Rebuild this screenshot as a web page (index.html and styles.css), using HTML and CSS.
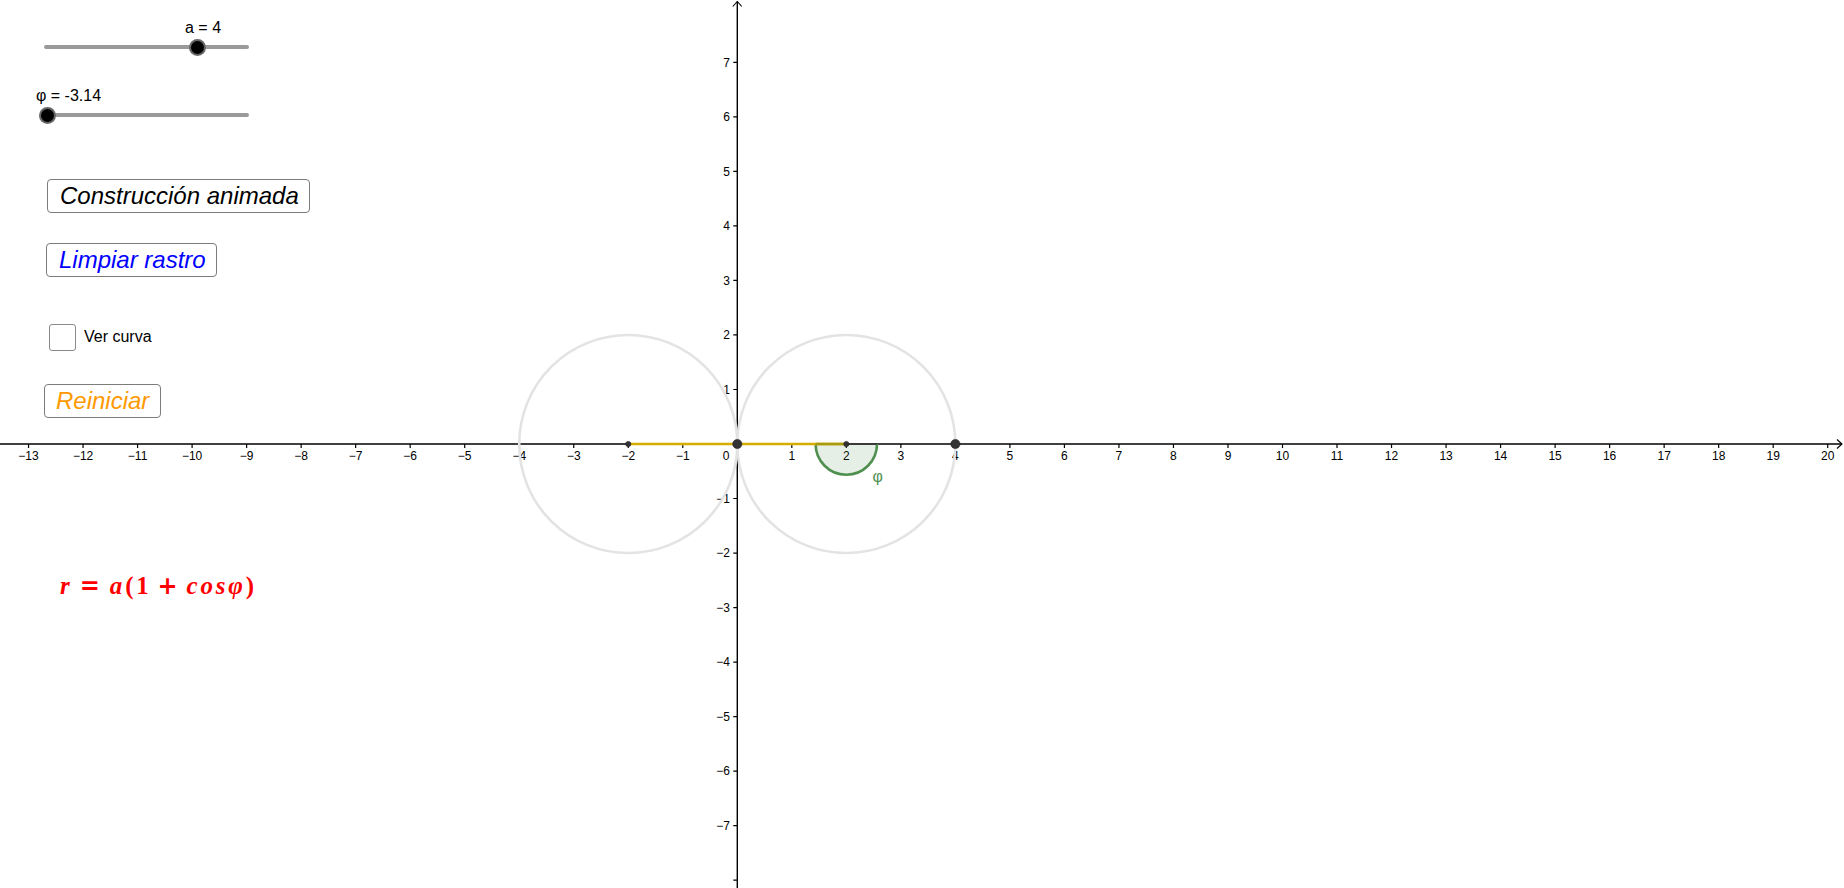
FILE: index.html
```html
<!DOCTYPE html>
<html lang="es">
<head>
<meta charset="utf-8">
<title>Cardioide</title>
<link rel="stylesheet" href="styles.css">
</head>
<body>
<div class="app">
  <svg class="graph" width="1844" height="888" viewBox="0 0 1844 888" xmlns="http://www.w3.org/2000/svg">
    <!-- axes -->
    <line class="axis" x1="0" y1="444" x2="1842" y2="444"/>
    <polyline class="arrow" points="1837,439.5 1842,444 1837,448.5"/>
    <line class="axis" x1="737.3" y1="888" x2="737.3" y2="1.5"/>
    <polyline class="arrow" points="732.8,6.5 737.3,1.5 741.8,6.5"/>
    <path class="ticks" d="M28.54 444v4M83.06 444v4M137.58 444v4M192.1 444v4M246.62 444v4M301.14 444v4M355.66 444v4M410.18 444v4M464.7 444v4M519.22 444v4M573.74 444v4M628.26 444v4M682.78 444v4M791.82 444v4M846.34 444v4M900.86 444v4M955.38 444v4M1009.9 444v4M1064.42 444v4M1118.94 444v4M1173.46 444v4M1227.98 444v4M1282.5 444v4M1337.02 444v4M1391.54 444v4M1446.06 444v4M1500.58 444v4M1555.1 444v4M1609.62 444v4M1664.14 444v4M1718.66 444v4M1773.18 444v4M1827.7 444v4M737.3 62.36h-4M737.3 116.88h-4M737.3 171.4h-4M737.3 225.92h-4M737.3 280.44h-4M737.3 334.96h-4M737.3 389.48h-4M737.3 498.52h-4M737.3 553.04h-4M737.3 607.56h-4M737.3 662.08h-4M737.3 716.6h-4M737.3 771.12h-4M737.3 825.64h-4M737.3 880.16h-4"/>
    <g class="xlabels">
      <text x="28.54" y="460">−13</text>
      <text x="83.06" y="460">−12</text>
      <text x="137.58" y="460">−11</text>
      <text x="192.1" y="460">−10</text>
      <text x="246.62" y="460">−9</text>
      <text x="301.14" y="460">−8</text>
      <text x="355.66" y="460">−7</text>
      <text x="410.18" y="460">−6</text>
      <text x="464.7" y="460">−5</text>
      <text x="519.22" y="460">−4</text>
      <text x="573.74" y="460">−3</text>
      <text x="628.26" y="460">−2</text>
      <text x="682.78" y="460">−1</text>
      <text x="726" y="460">0</text>
      <text x="791.82" y="460">1</text>
      <text x="846.34" y="460">2</text>
      <text x="900.86" y="460">3</text>
      <text x="955.38" y="460">4</text>
      <text x="1009.9" y="460">5</text>
      <text x="1064.42" y="460">6</text>
      <text x="1118.94" y="460">7</text>
      <text x="1173.46" y="460">8</text>
      <text x="1227.98" y="460">9</text>
      <text x="1282.5" y="460">10</text>
      <text x="1337.02" y="460">11</text>
      <text x="1391.54" y="460">12</text>
      <text x="1446.06" y="460">13</text>
      <text x="1500.58" y="460">14</text>
      <text x="1555.1" y="460">15</text>
      <text x="1609.62" y="460">16</text>
      <text x="1664.14" y="460">17</text>
      <text x="1718.66" y="460">18</text>
      <text x="1773.18" y="460">19</text>
      <text x="1827.7" y="460">20</text>
    </g>
    <g class="ylabels">
      <text x="730" y="66.6">7</text>
      <text x="730" y="121.2">6</text>
      <text x="730" y="175.7">5</text>
      <text x="730" y="230.2">4</text>
      <text x="730" y="284.7">3</text>
      <text x="730" y="339.3">2</text>
      <text x="730" y="393.8">1</text>
      <text x="730" y="502.8">−1</text>
      <text x="730" y="557.3">−2</text>
      <text x="730" y="611.9">−3</text>
      <text x="730" y="666.4">−4</text>
      <text x="730" y="720.9">−5</text>
      <text x="730" y="775.4">−6</text>
      <text x="730" y="829.9">−7</text>
    </g>
    <!-- circles -->
    <circle class="circ" cx="628.26" cy="444" r="109.04"/>
    <circle class="circ" cx="846.34" cy="444" r="109.04"/>
    <!-- angle sector -->
    <path class="sector" d="M815.6 444 A30.7 30.7 0 0 0 877 444 Z"/>
    <path class="sector-arc" d="M815.6 444 A30.7 30.7 0 0 0 877 444"/>
    <!-- segment -->
    <line class="seg" x1="628.26" y1="444" x2="846.34" y2="444"/>
    <line class="seg-dark" x1="815.6" y1="444" x2="846.34" y2="444"/>
    <line class="arm" x1="846.34" y1="444" x2="877" y2="444"/>
    <!-- points -->
    <circle class="pt" cx="737.3" cy="444" r="4.6"/>
    <circle class="pt" cx="955.38" cy="444" r="4.6"/>
    <circle class="pt" cx="628.26" cy="444" r="2.6"/>
    <circle class="pt" cx="846.34" cy="444" r="2.6"/>
    <text class="angle-label" x="872.5" y="481.5">φ</text>
  </svg>

  <div class="panel">
    <div class="slider slider-a">
      <div class="slider-label">a = 4</div>
      <div class="slider-track">
        <div class="knob knob-a"></div>
      </div>
    </div>
    <div class="slider slider-phi">
      <div class="slider-label">φ = -3.14</div>
      <div class="slider-track">
        <div class="knob knob-phi"></div>
      </div>
    </div>

    <button class="btn btn-build">Construcción animada</button>
    <button class="btn btn-clear">Limpiar rastro</button>

    <label class="check">
      <span class="check-box"></span>
      <span class="check-text">Ver curva</span>
    </label>

    <button class="btn btn-reset">Reiniciar</button>

    <div class="formula"><i>r</i><span class="op">=</span><i>a</i><span class="up">(1</span><span class="op op-bin">+</span><i>cos</i><i class="phi">φ</i><span class="up">)</span></div>
  </div>
</div>
</body>
</html>
```

FILE: styles.css
```css
html, body {
  margin: 0;
  padding: 0;
  background: #ffffff;
}

body {
  width: 1844px;
  height: 888px;
  overflow: hidden;
  font-family: "Liberation Sans", Arial, sans-serif;
}

.app {
  position: relative;
  width: 1844px;
  height: 888px;
}

.graph {
  display: block;
}

.axis {
  stroke: #000;
  stroke-width: 1.4;
}

.arrow {
  fill: none;
  stroke: #000;
  stroke-width: 1.1;
}

.ticks {
  stroke: #000;
  stroke-width: 1.2;
  fill: none;
}

.xlabels text,
.ylabels text {
  font-family: "Liberation Sans", Arial, sans-serif;
  font-size: 12px;
  fill: #000;
}

.xlabels text {
  text-anchor: middle;
}

.ylabels text {
  text-anchor: end;
}

.circ {
  fill: none;
  stroke: #e3e3e3;
  stroke-width: 2.6;
}

.sector {
  fill: rgba(76, 140, 76, 0.14);
  stroke: none;
}

.sector-arc {
  fill: none;
  stroke: #4f8f4f;
  stroke-width: 2.6;
}

.seg {
  stroke: #d6ae00;
  stroke-width: 2.6;
}

.seg-dark {
  stroke: #a99a12;
  stroke-width: 2.6;
}

.arm {
  stroke: #3a3a3a;
  stroke-width: 2;
}

.pt {
  fill: #333333;
  stroke: #222;
  stroke-width: 0.6;
}

.angle-label {
  font-family: "Liberation Sans", Arial, sans-serif;
  font-size: 16px;
  fill: #4f8f4f;
}

/* left panel */
.panel {
  position: absolute;
  top: 0;
  left: 0;
  display: flex;
  flex-direction: column;
  align-items: flex-start;
}

.slider {
  display: flex;
  flex-direction: column;
}

.slider-label {
  font-size: 16px;
  line-height: 20px;
  height: 20px;
  color: #000;
  white-space: nowrap;
}

.slider-track {
  position: relative;
  height: 18px;
  margin-left: 44px;
  width: 205px;
}

.slider-track::before {
  content: "";
  position: absolute;
  left: 0;
  right: 0;
  top: 7px;
  height: 4px;
  border-radius: 2px;
  background: #9a9a9a;
}

.knob {
  position: absolute;
  top: 0.5px;
  width: 17px;
  height: 17px;
  box-sizing: border-box;
  border-radius: 50%;
  background: #000;
  border: 2.5px solid rgba(120, 120, 120, 0.85);
}

.slider-a {
  margin-top: 18px;
}

.slider-a .slider-label {
  margin-left: 185px;
}

.knob-a {
  left: 144.5px;
}

.slider-phi {
  margin-top: 30px;
}

.slider-phi .slider-label {
  margin-left: 36px;
}

.knob-phi {
  left: -4.8px;
}

.btn {
  display: flex;
  align-items: center;
  box-sizing: border-box;
  height: 34px;
  padding: 0 10px 0 12px;
  margin: 0;
  border: 1px solid #7c7c7c;
  border-radius: 4px;
  background: #fff;
  font-family: "Liberation Sans", Arial, sans-serif;
  font-style: italic;
  font-size: 24px;
  line-height: 28px;
  white-space: nowrap;
}

.btn-build {
  margin-top: 55px;
  margin-left: 47px;
  color: #000;
}

.btn-clear {
  margin-top: 30px;
  margin-left: 46px;
  color: #0000ff;
}

.btn-reset {
  margin-top: 33px;
  margin-left: 44px;
  padding: 0 11px;
  color: #ff9900;
}

.check {
  display: flex;
  align-items: center;
  margin-top: 46px;
  margin-left: 49px;
  height: 28px;
}

.check-box {
  width: 27px;
  height: 27px;
  box-sizing: border-box;
  border: 1.4px solid #8a8a8a;
  border-radius: 3px;
  background: #fff;
}

.check-text {
  margin-left: 8px;
  font-size: 16px;
  color: #000;
}

.formula {
  margin-top: 153px;
  margin-left: 60px;
  height: 30px;
  line-height: 30px;
  font-family: "Liberation Serif", "Times New Roman", serif;
  font-weight: bold;
  font-size: 25px;
  color: #ff0000;
  white-space: nowrap;
  letter-spacing: 2.8px;
}

.formula i {
  font-style: italic;
}

.formula .op {
  font-family: "DejaVu Sans", sans-serif;
  font-size: 24px;
  margin: 0 0.3em;
}

.formula .op-bin {
  margin: 0 0.25em;
}
```
